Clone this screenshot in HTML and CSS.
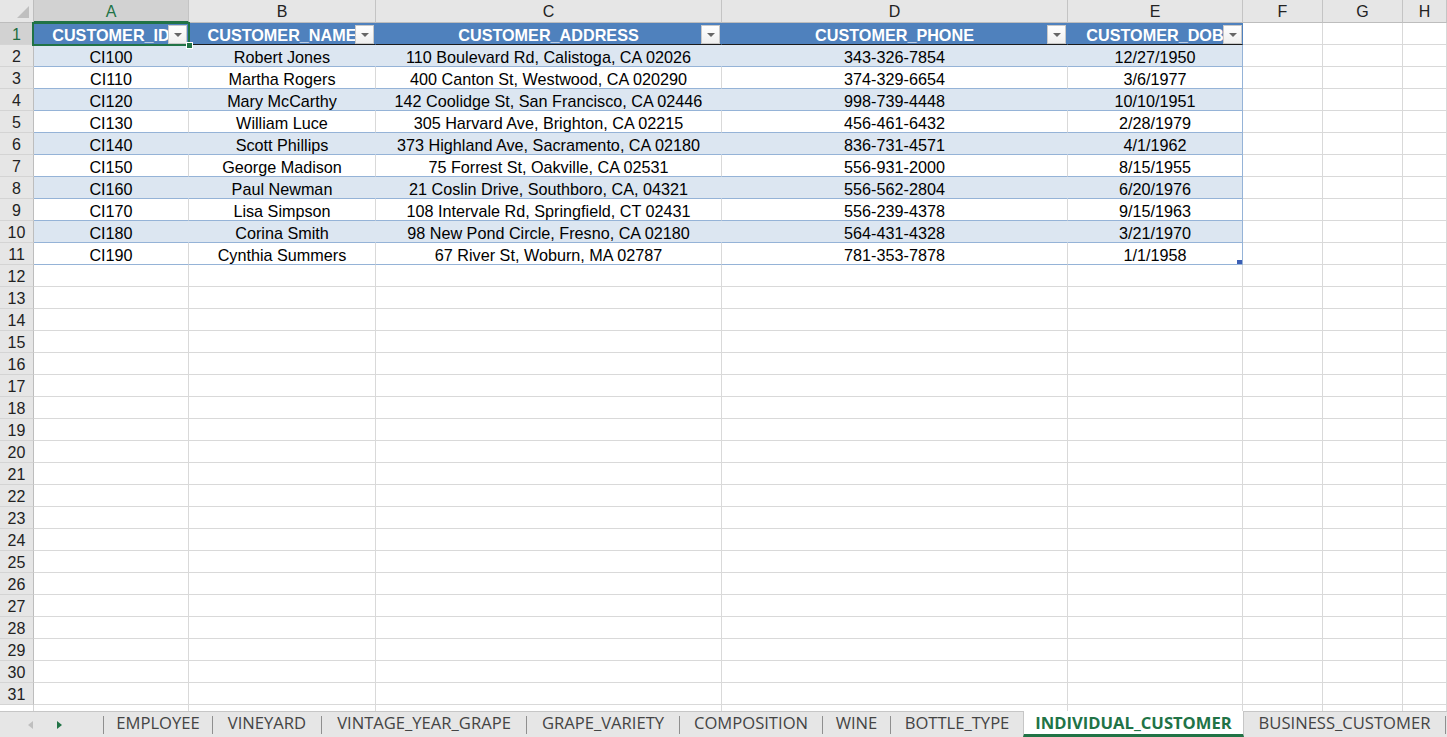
FILE: index.html
```html
<!DOCTYPE html>
<html>
<head>
<meta charset="utf-8">
<link rel="stylesheet" href="styles.css">
</head>
<body>
<div class="app">
  <div class="grid">
    <div class="row colhdr">
      <span class="corner"><svg width="14" height="14" viewBox="0 0 14 14"><polygon points="13,1 13,13 1,13" fill="#bfbfbf"/></svg></span>
      <span class="ch sel">A</span><span class="ch">B</span><span class="ch">C</span><span class="ch">D</span><span class="ch">E</span><span class="ch">F</span><span class="ch">G</span><span class="ch">H</span>
    </div>
    <div class="row hdrrow">
      <span class="rh sel">1</span>
      <span class="c hd"><span class="ht">CUSTOMER_ID</span><span class="dd"></span></span>
      <span class="c hd"><span class="ht">CUSTOMER_NAME</span><span class="dd"></span></span>
      <span class="c hd"><span class="ht">CUSTOMER_ADDRESS</span><span class="dd"></span></span>
      <span class="c hd"><span class="ht">CUSTOMER_PHONE</span><span class="dd"></span></span>
      <span class="c hd te"><span class="ht">CUSTOMER_DOB</span><span class="dd"></span></span>
      <span class="c"></span><span class="c"></span><span class="c"></span>
    </div>
    <div class="row band"><span class="rh">2</span><span class="c tc">CI100</span><span class="c tc">Robert Jones</span><span class="c tc">110 Boulevard Rd, Calistoga, CA 02026</span><span class="c tc">343-326-7854</span><span class="c tc te">12/27/1950</span><span class="c"></span><span class="c"></span><span class="c"></span></div>
    <div class="row"><span class="rh">3</span><span class="c tc">CI110</span><span class="c tc">Martha Rogers</span><span class="c tc">400 Canton St, Westwood, CA 020290</span><span class="c tc">374-329-6654</span><span class="c tc te">3/6/1977</span><span class="c"></span><span class="c"></span><span class="c"></span></div>
    <div class="row band"><span class="rh">4</span><span class="c tc">CI120</span><span class="c tc">Mary McCarthy</span><span class="c tc">142 Coolidge St, San Francisco, CA 02446</span><span class="c tc">998-739-4448</span><span class="c tc te">10/10/1951</span><span class="c"></span><span class="c"></span><span class="c"></span></div>
    <div class="row"><span class="rh">5</span><span class="c tc">CI130</span><span class="c tc">William Luce</span><span class="c tc">305 Harvard Ave, Brighton, CA 02215</span><span class="c tc">456-461-6432</span><span class="c tc te">2/28/1979</span><span class="c"></span><span class="c"></span><span class="c"></span></div>
    <div class="row band"><span class="rh">6</span><span class="c tc">CI140</span><span class="c tc">Scott Phillips</span><span class="c tc">373 Highland Ave, Sacramento, CA 02180</span><span class="c tc">836-731-4571</span><span class="c tc te">4/1/1962</span><span class="c"></span><span class="c"></span><span class="c"></span></div>
    <div class="row"><span class="rh">7</span><span class="c tc">CI150</span><span class="c tc">George Madison</span><span class="c tc">75 Forrest St, Oakville, CA 02531</span><span class="c tc">556-931-2000</span><span class="c tc te">8/15/1955</span><span class="c"></span><span class="c"></span><span class="c"></span></div>
    <div class="row band"><span class="rh">8</span><span class="c tc">CI160</span><span class="c tc">Paul Newman</span><span class="c tc">21 Coslin Drive, Southboro, CA, 04321</span><span class="c tc">556-562-2804</span><span class="c tc te">6/20/1976</span><span class="c"></span><span class="c"></span><span class="c"></span></div>
    <div class="row"><span class="rh">9</span><span class="c tc">CI170</span><span class="c tc">Lisa Simpson</span><span class="c tc">108 Intervale Rd, Springfield, CT 02431</span><span class="c tc">556-239-4378</span><span class="c tc te">9/15/1963</span><span class="c"></span><span class="c"></span><span class="c"></span></div>
    <div class="row band"><span class="rh">10</span><span class="c tc">CI180</span><span class="c tc">Corina Smith</span><span class="c tc">98 New Pond Circle, Fresno, CA 02180</span><span class="c tc">564-431-4328</span><span class="c tc te">3/21/1970</span><span class="c"></span><span class="c"></span><span class="c"></span></div>
    <div class="row"><span class="rh">11</span><span class="c tc">CI190</span><span class="c tc">Cynthia Summers</span><span class="c tc">67 River St, Woburn, MA 02787</span><span class="c tc">781-353-7878</span><span class="c tc te last">1/1/1958<span class="resize"></span></span><span class="c"></span><span class="c"></span><span class="c"></span></div>
    <div class="row"><span class="rh">12</span><span class="c"></span><span class="c"></span><span class="c"></span><span class="c"></span><span class="c"></span><span class="c"></span><span class="c"></span><span class="c"></span></div>
    <div class="row"><span class="rh">13</span><span class="c"></span><span class="c"></span><span class="c"></span><span class="c"></span><span class="c"></span><span class="c"></span><span class="c"></span><span class="c"></span></div>
    <div class="row"><span class="rh">14</span><span class="c"></span><span class="c"></span><span class="c"></span><span class="c"></span><span class="c"></span><span class="c"></span><span class="c"></span><span class="c"></span></div>
    <div class="row"><span class="rh">15</span><span class="c"></span><span class="c"></span><span class="c"></span><span class="c"></span><span class="c"></span><span class="c"></span><span class="c"></span><span class="c"></span></div>
    <div class="row"><span class="rh">16</span><span class="c"></span><span class="c"></span><span class="c"></span><span class="c"></span><span class="c"></span><span class="c"></span><span class="c"></span><span class="c"></span></div>
    <div class="row"><span class="rh">17</span><span class="c"></span><span class="c"></span><span class="c"></span><span class="c"></span><span class="c"></span><span class="c"></span><span class="c"></span><span class="c"></span></div>
    <div class="row"><span class="rh">18</span><span class="c"></span><span class="c"></span><span class="c"></span><span class="c"></span><span class="c"></span><span class="c"></span><span class="c"></span><span class="c"></span></div>
    <div class="row"><span class="rh">19</span><span class="c"></span><span class="c"></span><span class="c"></span><span class="c"></span><span class="c"></span><span class="c"></span><span class="c"></span><span class="c"></span></div>
    <div class="row"><span class="rh">20</span><span class="c"></span><span class="c"></span><span class="c"></span><span class="c"></span><span class="c"></span><span class="c"></span><span class="c"></span><span class="c"></span></div>
    <div class="row"><span class="rh">21</span><span class="c"></span><span class="c"></span><span class="c"></span><span class="c"></span><span class="c"></span><span class="c"></span><span class="c"></span><span class="c"></span></div>
    <div class="row"><span class="rh">22</span><span class="c"></span><span class="c"></span><span class="c"></span><span class="c"></span><span class="c"></span><span class="c"></span><span class="c"></span><span class="c"></span></div>
    <div class="row"><span class="rh">23</span><span class="c"></span><span class="c"></span><span class="c"></span><span class="c"></span><span class="c"></span><span class="c"></span><span class="c"></span><span class="c"></span></div>
    <div class="row"><span class="rh">24</span><span class="c"></span><span class="c"></span><span class="c"></span><span class="c"></span><span class="c"></span><span class="c"></span><span class="c"></span><span class="c"></span></div>
    <div class="row"><span class="rh">25</span><span class="c"></span><span class="c"></span><span class="c"></span><span class="c"></span><span class="c"></span><span class="c"></span><span class="c"></span><span class="c"></span></div>
    <div class="row"><span class="rh">26</span><span class="c"></span><span class="c"></span><span class="c"></span><span class="c"></span><span class="c"></span><span class="c"></span><span class="c"></span><span class="c"></span></div>
    <div class="row"><span class="rh">27</span><span class="c"></span><span class="c"></span><span class="c"></span><span class="c"></span><span class="c"></span><span class="c"></span><span class="c"></span><span class="c"></span></div>
    <div class="row"><span class="rh">28</span><span class="c"></span><span class="c"></span><span class="c"></span><span class="c"></span><span class="c"></span><span class="c"></span><span class="c"></span><span class="c"></span></div>
    <div class="row"><span class="rh">29</span><span class="c"></span><span class="c"></span><span class="c"></span><span class="c"></span><span class="c"></span><span class="c"></span><span class="c"></span><span class="c"></span></div>
    <div class="row"><span class="rh">30</span><span class="c"></span><span class="c"></span><span class="c"></span><span class="c"></span><span class="c"></span><span class="c"></span><span class="c"></span><span class="c"></span></div>
    <div class="row"><span class="rh">31</span><span class="c"></span><span class="c"></span><span class="c"></span><span class="c"></span><span class="c"></span><span class="c"></span><span class="c"></span><span class="c"></span></div>
    <div class="row partial"><span class="rh"></span><span class="c"></span><span class="c"></span><span class="c"></span><span class="c"></span><span class="c"></span><span class="c"></span><span class="c"></span><span class="c"></span></div>
    <div class="selection"><span class="handle"></span></div>
  </div>
  <div class="tabs">
    <div class="nav"><span class="arr left"></span><span class="arr right"></span></div>
    <span class="sep"></span>
    <span class="tab w-emp">EMPLOYEE</span><span class="sep"></span>
    <span class="tab w-vin">VINEYARD</span><span class="sep"></span>
    <span class="tab w-vyg">VINTAGE_YEAR_GRAPE</span><span class="sep"></span>
    <span class="tab w-gv">GRAPE_VARIETY</span><span class="sep"></span>
    <span class="tab w-comp">COMPOSITION</span><span class="sep"></span>
    <span class="tab w-wine">WINE</span><span class="sep"></span>
    <span class="tab w-bt">BOTTLE_TYPE</span>
    <span class="tab active">INDIVIDUAL_CUSTOMER</span>
    <span class="tab w-bus">BUSINESS_CUSTOMER</span><span class="sep"></span>
  </div>
</div>
</body>
</html>
```

FILE: styles.css
```css
html, body {
  margin: 0;
  padding: 0;
  background: #fff;
  overflow: hidden;
}
.app {
  width: 1447px;
  height: 737px;
  display: flex;
  flex-direction: column;
  font-family: "Liberation Sans", Arial, sans-serif;
}
.grid {
  position: relative;
  display: flex;
  flex-direction: column;
}
.row {
  display: grid;
  grid-template-columns: 34px 155px 187px 346px 346px 175px 80px 80px 1fr;
  height: 22px;
}
.row > span {
  box-sizing: border-box;
  white-space: nowrap;
  overflow: hidden;
}
.c {
  border-right: 1px solid #d9d9d9;
  border-bottom: 1px solid #d9d9d9;
  text-align: center;
  line-height: 20px;
  padding-top: 2px;
  font-size: 16.2px;
  color: #000;
}
.rh {
  background: #e6e6e6;
  border-right: 1px solid #bdbdbd;
  border-bottom: 1px solid #d4d4d4;
  text-align: center;
  line-height: 20px;
  padding-top: 2px;
  font-size: 16px;
  color: #222;
}
.rh.sel {
  background: #d2d2d2;
  color: #1e6b40;
}
.colhdr {
  height: 23px;
}
.corner {
  background: #e6e6e6;
  border-right: 1px solid #bdbdbd;
  border-bottom: 1px solid #bdbdbd;
  display: flex;
  align-items: flex-end;
  justify-content: flex-end;
  padding: 0 3px 3px 0;
}
.corner svg {
  display: block;
}
.ch {
  background: #e6e6e6;
  border-right: 1px solid #c4c4c4;
  border-bottom: 1px solid #bdbdbd;
  text-align: center;
  line-height: 22px;
  padding-top: 1px;
  font-size: 16px;
  color: #222;
}
.ch.sel {
  background: #d2d2d2;
  color: #217346;
  border-bottom: 2px solid #217346;
}

/* table */
.tc {
  border-bottom-color: #95b3d7;
}
.band .tc {
  background: #dce6f1;
  border-right-color: #dce6f1;
}
.tc.te {
  border-right-color: #95b3d7;
}
.band .tc.te {
  border-right-color: #95b3d7;
}
.hd {
  position: relative;
  background: #4f81bd;
  border-right-color: #4f81bd;
  border-bottom: 1px solid #1b1b1b;
  color: #fff;
  font-weight: bold;
}
.hd.te {
  border-right-color: #4f81bd;
}
.ht {
  display: block;
  text-align: center;
}
.dd {
  position: absolute;
  right: 1px;
  top: 2px;
  width: 19px;
  height: 19px;
  box-sizing: border-box;
  border: 1px solid #c9c9c9;
  background: linear-gradient(#ffffff, #efefef);
}
.dd::after {
  content: "";
  position: absolute;
  left: 5px;
  top: 7px;
  border-left: 4px solid transparent;
  border-right: 4px solid transparent;
  border-top: 4px solid #666;
}
.hd.te .dd {
  right: 0;
}
.last {
  position: relative;
}
.resize {
  position: absolute;
  right: 0;
  bottom: 0;
  width: 5px;
  height: 4px;
  background: #3c5fb5;
}
.partial {
  height: 6px;
}
.partial .c, .partial .rh {
  border-bottom: none;
  padding-top: 0;
}
.partial .rh {
  background: #fff;
  border-right-color: #d4d4d4;
}
.selection {
  position: absolute;
  left: 32px;
  top: 22px;
  width: 158px;
  height: 24px;
  box-sizing: border-box;
  border: 2px solid #217346;
  pointer-events: none;
}
.handle {
  position: absolute;
  right: -5px;
  bottom: -5px;
  width: 5px;
  height: 5px;
  background: #217346;
  border: 1px solid #fff;
}

/* sheet tabs */
.tabs {
  height: 26px;
  box-sizing: border-box;
  background: #e6e6e6;
  border-top: 1px solid #c6c6c6;
  display: flex;
  align-items: stretch;
  font-family: "Open Sans", "Noto Sans", sans-serif;
  font-size: 16.6px;
  color: #444;
}
.nav {
  width: 103px;
  position: relative;
  flex: none;
}
.arr {
  position: absolute;
  top: 9px;
  width: 0;
  height: 0;
  border-top: 4px solid transparent;
  border-bottom: 4px solid transparent;
}
.arr.left {
  left: 28px;
  border-right: 5px solid #bfbfbf;
}
.arr.right {
  left: 57px;
  border-left: 5px solid #217346;
}
.sep {
  width: 1px;
  flex: none;
  background: #8f8f8f;
  margin: 4px 0 3px;
}
.tab {
  box-sizing: border-box;
  text-align: center;
  line-height: 21px;
  flex: none;
  white-space: nowrap;
  overflow: hidden;
}
.w-emp { width: 108px; }
.w-vin { width: 108px; }
.w-vyg { width: 204px; }
.w-gv { width: 152px; }
.w-comp { width: 142px; }
.w-wine { width: 67px; }
.w-bt { width: 132px; }
.w-bus { width: 201px; }
.tab.active {
  width: 221px;
  background: #fff;
  margin-top: -1px;
  border-left: 1px solid #c6c6c6;
  border-right: 1px solid #c6c6c6;
  border-bottom: 3px solid #217346;
  padding-top: 1px;
  color: #217346;
  font-weight: bold;
}
```
